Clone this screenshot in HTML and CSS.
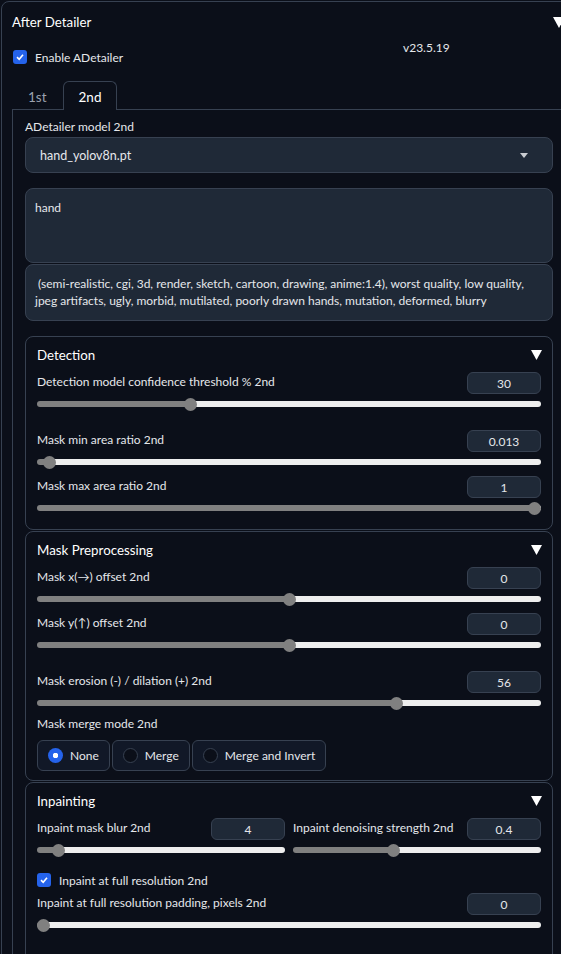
FILE: index.html
```html
<!DOCTYPE html>
<html lang="en">
<head>
  <meta charset="UTF-8">
  <title>After Detailer</title>
  <link rel="stylesheet" href="styles.css">
</head>
<body>

<div class="panel">
  <div class="panel-head">
    <span class="panel-title">After Detailer</span>
    <svg class="caret-big" width="12" height="11" viewBox="0 0 12 11"><polygon points="0,0 12,0 6,11" fill="#fff"/></svg>
  </div>

  <div class="top-row">
    <div class="col">
      <label class="check">
        <span class="box"><svg width="10" height="10" viewBox="0 0 10 10"><polyline points="2,5.2 4.2,7.3 8,2.8" fill="none" stroke="#fff" stroke-width="1.6"/></svg></span>
        Enable ADetailer
      </label>
    </div>
    <div class="col version">v23.5.19</div>
  </div>

  <div class="tabs">
    <div class="tab-nav">
      <div class="tab">1st</div>
      <div class="tab selected">2nd</div>
    </div>

    <div class="tab-body">
      <div class="field-label">ADetailer model 2nd</div>
      <div class="dropdown">
        <span>hand_yolov8n.pt</span>
        <svg width="8" height="5" viewBox="0 0 8 5"><polygon points="0,0 8,0 4,5" fill="#c9ccd1"/></svg>
      </div>

      <div class="prompt">hand</div>
      <div class="prompt neg"> (semi-realistic, cgi, 3d, render, sketch, cartoon, drawing, anime:1.4), worst quality, low quality, jpeg artifacts, ugly, morbid, mutilated, poorly drawn hands, mutation, deformed, blurry</div>

      <!-- Detection -->
      <div class="acc acc-detect">
        <div class="acc-head">
          <span>Detection</span>
          <svg width="11" height="10" viewBox="0 0 11 10"><polygon points="0,0 11,0 5.5,10" fill="#fff"/></svg>
        </div>
        <div class="group wide">
          <div class="sl-head"><span>Detection model confidence threshold % 2nd</span><div class="num">30</div></div>
          <input class="slider" type="range" min="0" max="100" value="30" style="--v:0.3">
        </div>
        <div class="group">
          <div class="sl-head"><span>Mask min area ratio 2nd</span><div class="num">0.013</div></div>
          <input class="slider" type="range" min="0.001" max="1" step="0.001" value="0.013" style="--v:0.012">
        </div>
        <div class="group last">
          <div class="sl-head"><span>Mask max area ratio 2nd</span><div class="num">1</div></div>
          <input class="slider" type="range" min="0.001" max="1" step="0.001" value="1" style="--v:1">
        </div>
      </div>

      <!-- Mask Preprocessing -->
      <div class="acc acc-mask">
        <div class="acc-head">
          <span>Mask Preprocessing</span>
          <svg width="11" height="10" viewBox="0 0 11 10"><polygon points="0,0 11,0 5.5,10" fill="#fff"/></svg>
        </div>
        <div class="group">
          <div class="sl-head"><span>Mask x(→) offset 2nd</span><div class="num">0</div></div>
          <input class="slider" type="range" min="-200" max="200" value="0" style="--v:0.5">
        </div>
        <div class="group wide">
          <div class="sl-head"><span>Mask y(↑) offset 2nd</span><div class="num">0</div></div>
          <input class="slider" type="range" min="-200" max="200" value="0" style="--v:0.5">
        </div>
        <div class="group last">
          <div class="sl-head"><span>Mask erosion (-) / dilation (+) 2nd</span><div class="num">56</div></div>
          <input class="slider" type="range" min="-128" max="128" value="56" style="--v:0.719">
        </div>
        <div class="field-label merge-label">Mask merge mode 2nd</div>
        <div class="radios">
          <label class="radio"><span class="dot on"></span>None</label>
          <label class="radio"><span class="dot"></span>Merge</label>
          <label class="radio"><span class="dot"></span>Merge and Invert</label>
        </div>
      </div>

      <!-- Inpainting -->
      <div class="acc acc-inpaint">
        <div class="acc-head">
          <span>Inpainting</span>
          <svg width="11" height="10" viewBox="0 0 11 10"><polygon points="0,0 11,0 5.5,10" fill="#fff"/></svg>
        </div>
        <div class="two-col">
          <div class="group last">
            <div class="sl-head"><span>Inpaint mask blur 2nd</span><div class="num">4</div></div>
            <input class="slider" type="range" min="0" max="64" value="4" style="--v:0.0625">
          </div>
          <div class="group last">
            <div class="sl-head"><span>Inpaint denoising strength 2nd</span><div class="num">0.4</div></div>
            <input class="slider" type="range" min="0" max="1" step="0.01" value="0.4" style="--v:0.4">
          </div>
        </div>
        <label class="check inner-check">
          <span class="box"><svg width="10" height="10" viewBox="0 0 10 10"><polyline points="2,5.2 4.2,7.3 8,2.8" fill="none" stroke="#fff" stroke-width="1.6"/></svg></span>
          Inpaint at full resolution 2nd
        </label>
        <div class="group last pad-group">
          <div class="sl-head"><span>Inpaint at full resolution padding, pixels 2nd</span><div class="num">0</div></div>
          <input class="slider" type="range" min="0" max="256" value="0" style="--v:0">
        </div>
      </div>
    </div>
  </div>
</div>

</body>
</html>
```

FILE: styles.css
```css
html, body {
  margin: 0;
  overflow: hidden;
  background: #0b0f19;
}

body {
  font-family: 'Lato', 'Noto Sans', sans-serif;
  font-size: 12px;
  color: #e5e7eb;
}

* {
  box-sizing: border-box;
}

/* outer accordion */
.panel {
  width: 576px;
  margin: 1px 0 0 1px;
  border: 1px solid #374151;
  border-radius: 8px;
  padding: 9px 10px 30px;
}

.panel-head {
  display: flex;
  justify-content: space-between;
  align-items: center;
  height: 22px;
}

.panel-title {
  font-size: 13.3px;
  color: #fff;
}

.caret-big {
  margin-right: 1px;
}

.top-row {
  display: grid;
  grid-template-columns: 1fr 1fr;
  gap: 16px;
  margin-top: 5px;
}

.top-row .col:first-child {
  padding-top: 9px;
}

.version {
  line-height: 20px;
  padding-left: 106px;
}

.check {
  display: flex;
  align-items: center;
  gap: 8px;
  height: 20px;
  margin-left: 1px;
}

.box {
  width: 14px;
  height: 14px;
  border-radius: 3px;
  background: #2563eb;
  display: flex;
  align-items: center;
  justify-content: center;
}

/* tabs */
.tabs {
  margin-top: 14px;
}

.tab-nav {
  display: flex;
  border-bottom: 1px solid #374151;
  height: 29px;
}

.tab {
  height: 29px;
  padding: 0 15px;
  line-height: 30px;
  font-size: 13.5px;
  color: #9ca3af;
  border: 1px solid transparent;
  border-bottom: none;
}

.tab.selected {
  color: #fff;
  border-color: #374151;
  border-radius: 6px 6px 0 0;
  background: #0b0f19;
  margin-bottom: -1px;
}

.tab-body {
  border: 1px solid #374151;
  border-top: none;
  padding: 8px 12px 40px;
}

.field-label {
  line-height: 18px;
}

.dropdown {
  margin-top: 1px;
  height: 36px;
  border: 1px solid #374151;
  border-radius: 8px;
  background: #1f2937;
  display: flex;
  align-items: center;
  justify-content: space-between;
  padding: 0 24px 0 14px;
  font-size: 12.5px;
}

.prompt {
  margin-top: 15px;
  height: 75px;
  border: 1px solid #374151;
  border-radius: 8px;
  background: #1f2937;
  padding: 9px 9px;
  line-height: 20px;
  white-space: pre-wrap;
}

.prompt.neg {
  margin-top: 1px;
  height: 57px;
  padding-top: 10px;
  line-height: 17px;
}

/* inner accordions */
.acc {
  margin-top: 1px;
  border: 1px solid #374151;
  border-radius: 8px;
  padding: 8px 11px 18px;
}

.acc-detect {
  margin-top: 15px;
}

.acc-mask {
  padding-bottom: 9px;
}

.acc-inpaint {
  padding-bottom: 40px;
}

.acc-head {
  display: flex;
  justify-content: space-between;
  align-items: center;
  height: 20px;
  font-size: 13.3px;
  color: #fff;
  margin-bottom: 7px;
}

.acc-head svg {
  margin-right: -1px;
}

.group {
  margin-bottom: 11px;
}

.group.wide {
  margin-bottom: 23px;
}

.group.last {
  margin-bottom: 0;
}

.sl-head {
  display: flex;
  justify-content: space-between;
  align-items: center;
  height: 22px;
}

.sl-head span {
  margin-top: -3px;
}

.num {
  width: 74px;
  height: 22px;
  border: 1px solid #374151;
  border-radius: 6px;
  background: #1f2937;
  text-align: center;
  line-height: 21px;
  flex-shrink: 0;
}

.slider {
  -webkit-appearance: none;
  appearance: none;
  display: block;
  width: 100%;
  height: 6px;
  margin: 7px 0 0;
  border-radius: 3px;
  background: linear-gradient(to right, #808080 calc(6.5px + (100% - 13px) * var(--v)), #eeeeee calc(6.5px + (100% - 13px) * var(--v)));
}

.slider::-webkit-slider-thumb {
  -webkit-appearance: none;
  width: 13px;
  height: 13px;
  border-radius: 50%;
  background: #808080;
}

.merge-label {
  margin-top: 9px;
}

.radios {
  display: flex;
  gap: 2px;
  margin-top: 7px;
}

.radio {
  display: flex;
  align-items: center;
  gap: 7px;
  height: 31px;
  padding: 0 10px;
  border: 1px solid #374151;
  border-radius: 6px;
  background: #111827;
}

.dot {
  width: 15px;
  height: 15px;
  border-radius: 50%;
  border: 1px solid #374151;
  background: #0b0f19;
}

.dot.on {
  border: none;
  background: #2563eb radial-gradient(circle, #fff 0 2.5px, transparent 3px);
}

.two-col {
  display: grid;
  grid-template-columns: 1fr 1fr;
  gap: 8px;
}

.inner-check {
  margin: 17px 0 0;
}

.pad-group {
  margin-top: 3px;
}
```
